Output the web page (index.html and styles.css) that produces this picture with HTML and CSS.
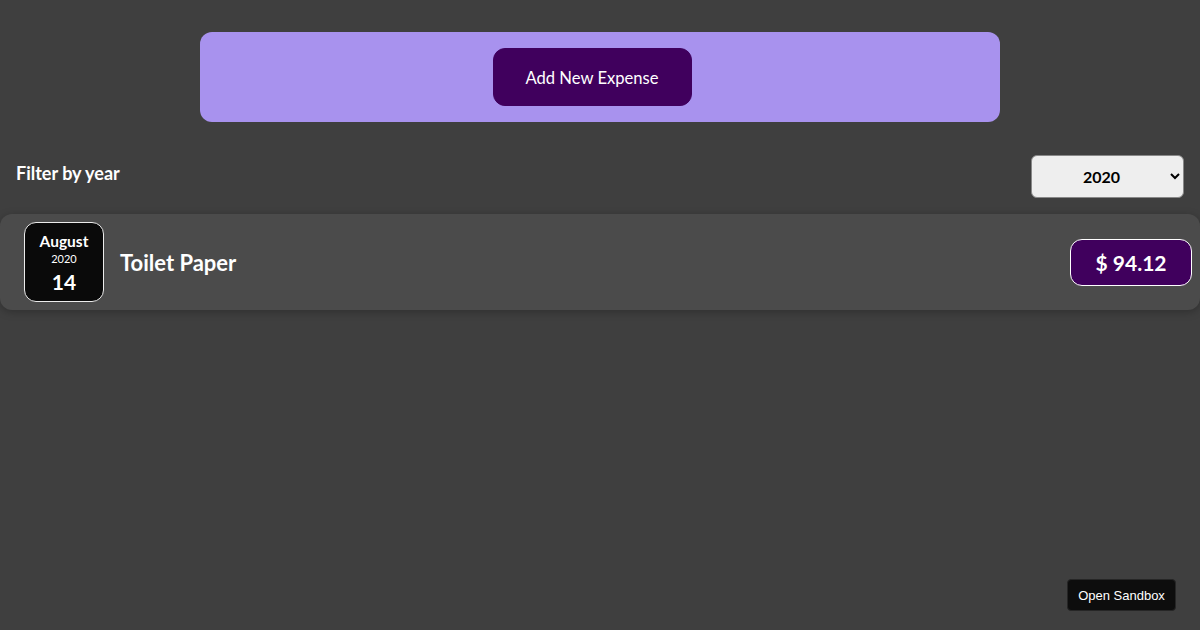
FILE: index.html
```html
<html>
  <head>
    <title>Expenses</title>
    <link rel="stylesheet" href="styles.css">
  </head>
  <body>
    <div id="root">
      <div class="new-expense">
        <button class="new-expense-btn">Add New Expense</button>
      </div>
      <div class="expenses">
        <div class="expenses-filter">
          <label class="filter-label">Filter by year</label>
          <select class="filter-select">
            <option>2022</option>
            <option>2021</option>
            <option selected>2020</option>
            <option>2019</option>
          </select>
        </div>
        <ul class="expenses-list">
          <li class="expense-item">
            <div class="expense-date">
              <div class="expense-date-month">August</div>
              <div class="expense-date-year">2020</div>
              <div class="expense-date-day">14</div>
            </div>
            <div class="expense-desc">
              <h2>Toilet Paper</h2>
              <div class="expense-price">$ 94.12</div>
            </div>
          </li>
        </ul>
      </div>
    </div>
    <a class="sandbox-btn">Open Sandbox</a>
  </body>
</html>
```

FILE: styles.css
```css
body {
  margin: 0;
  background-color: #3f3f3f;
  font-family: Lato, "Noto Sans", sans-serif;
}
#root {
  padding-top: 32px;
}
.new-expense {
  width: 800px;
  height: 90px;
  margin: 0 auto 32px auto;
  background-color: #a892ee;
  border-radius: 12px;
  display: flex;
  justify-content: center;
  align-items: center;
}
.new-expense-btn {
  font-family: inherit;
  font-size: 16.6px;
  color: #fff;
  background-color: #40005d;
  border: 1px solid #40005d;
  border-radius: 12px;
  width: 199px;
  height: 58px;
  padding-top: 2px;
  margin-right: 16px;
  cursor: pointer;
}
.expenses-filter {
  display: flex;
  justify-content: space-between;
  align-items: center;
  padding: 0 16px;
  height: 44px;
  margin-bottom: 16px;
}
.filter-label {
  color: #fff;
  font-weight: bold;
  font-size: 18px;
  margin-top: -7px;
}
.filter-select {
  font-family: inherit;
  font-size: 16px;
  font-weight: bold;
  width: 153px;
  height: 43px;
  padding: 0 8px;
  text-align: center;
  text-align-last: center;
  background-color: #eee;
  border: 1px solid #888;
  border-radius: 6px;
}
.expenses-list {
  list-style: none;
  margin: 0;
  padding: 0;
}
.expense-item {
  display: flex;
  align-items: center;
  height: 96px;
  box-sizing: border-box;
  padding: 8px 8px 8px 24px;
  background-color: #4b4b4b;
  border-radius: 12px;
  box-shadow: 0 2px 8px rgba(0, 0, 0, 0.25);
}
.expense-date {
  width: 80px;
  height: 80px;
  box-sizing: border-box;
  padding-top: 2px;
  border: 1px solid #ececec;
  border-radius: 12px;
  background-color: #0a0a0a;
  color: #fff;
  display: flex;
  flex-direction: column;
  align-items: center;
  justify-content: center;
}
.expense-date-month {
  font-size: 15.5px;
  font-weight: bold;
  line-height: 18px;
}
.expense-date-year {
  font-size: 11px;
  line-height: 14px;
  margin-top: 2px;
}
.expense-date-day {
  font-size: 21px;
  font-weight: bold;
  line-height: 24px;
  margin-top: 4px;
}
.expense-desc {
  flex: 1;
  display: flex;
  justify-content: space-between;
  align-items: center;
  margin-left: 16px;
}
.expense-desc h2 {
  margin: 0;
  font-size: 22px;
  color: #fff;
}
.expense-price {
  font-size: 21px;
  font-weight: bold;
  color: #fff;
  background-color: #40005d;
  border: 1px solid #fff;
  border-radius: 12px;
  width: 122px;
  height: 47px;
  box-sizing: border-box;
  display: flex;
  justify-content: center;
  align-items: center;
}
.sandbox-btn {
  position: fixed;
  right: 24px;
  bottom: 19px;
  width: 109px;
  height: 32px;
  box-sizing: border-box;
  display: flex;
  justify-content: center;
  align-items: center;
  background-color: #0d0d0d;
  border: 1px solid #262626;
  border-radius: 4px;
  color: #fff;
  font-family: "Liberation Sans", Arial, sans-serif;
  font-size: 13px;
}
```
